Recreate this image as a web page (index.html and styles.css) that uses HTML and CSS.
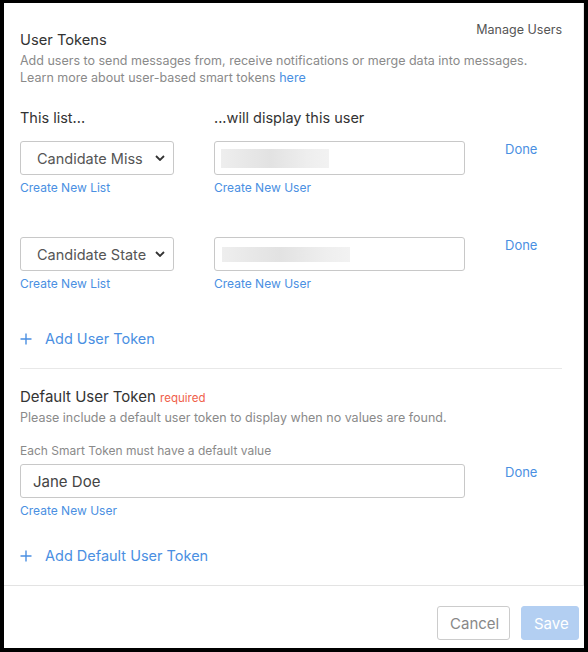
FILE: index.html
```html
<!DOCTYPE html>
<html>
<head>
<meta charset="utf-8">
<link rel="stylesheet" href="styles.css">
</head>
<body>
<div class="panel">
  <div class="content">
    <div class="header">
      <div class="title">User Tokens</div>
      <div class="manage">Manage Users</div>
    </div>
    <p class="desc">Add users to send messages from, receive notifications or merge data into messages.<br>Learn more about user-based smart tokens <a class="link">here</a></p>

    <div class="cols">
      <div class="col-a colhead">This list...</div>
      <div class="col-b colhead">...will display this user</div>
    </div>

    <div class="row">
      <div class="col-a">
        <div class="select"><span class="sel-text">Candidate Miss</span><svg class="chev" viewBox="0 0 10 6" width="10" height="6"><path d="M1 1l4 4 4-4" fill="none" stroke="#333" stroke-width="1.8"/></svg></div>
        <a class="link small">Create New List</a>
      </div>
      <div class="col-b">
        <div class="input"><span class="blur b1"></span></div>
        <a class="link small">Create New User</a>
      </div>
      <a class="link done">Done</a>
    </div>

    <div class="row">
      <div class="col-a">
        <div class="select"><span class="sel-text">Candidate State</span><svg class="chev" viewBox="0 0 10 6" width="10" height="6"><path d="M1 1l4 4 4-4" fill="none" stroke="#333" stroke-width="1.8"/></svg></div>
        <a class="link small">Create New List</a>
      </div>
      <div class="col-b">
        <div class="input"><span class="blur b2"></span></div>
        <a class="link small">Create New User</a>
      </div>
      <a class="link done">Done</a>
    </div>

    <a class="link add"><svg class="plus" viewBox="0 0 12 12" width="12" height="12"><path d="M6 0.5v11M0.5 6h11" stroke="#4a8fe2" stroke-width="1.4" fill="none"/></svg>Add User Token</a>

    <div class="sep"></div>

    <div class="title2">Default User Token <span class="req">required</span></div>
    <p class="desc2">Please include a default user token to display when no values are found.</p>
    <p class="desc3">Each Smart Token must have a default value</p>

    <div class="row row-default">
      <div class="col-wide">
        <div class="input wide"><span class="val">Jane Doe</span></div>
        <a class="link small">Create New User</a>
      </div>
      <a class="link done">Done</a>
    </div>

    <a class="link add add2"><svg class="plus" viewBox="0 0 12 12" width="12" height="12"><path d="M6 0.5v11M0.5 6h11" stroke="#4a8fe2" stroke-width="1.4" fill="none"/></svg>Add Default User Token</a>
  </div>
  <div class="footer">
    <button class="btn cancel">Cancel</button>
    <button class="btn save">Save</button>
  </div>
</div>
</body>
</html>
```
FILE: styles.css
```css
* { box-sizing: border-box; }
html, body { margin: 0; padding: 0; }
body {
  background: #000;
  width: 588px;
  height: 652px;
  padding: 3px 4px 4px 4px;
  font-family: "Inter", "Liberation Sans", sans-serif;
}
.panel {
  width: 580px;
  height: 645px;
  background: #fff;
  display: flex;
  flex-direction: column;
}
.content {
  height: 583px;
  border-right: 1px solid #e6e6e6;
  border-bottom: 1px solid #e3e3e3;
  padding: 0 21px 0 16px;
}
.header {
  display: flex;
  justify-content: space-between;
  align-items: flex-start;
}
.title {
  font-size: 14.7px;
  color: #333;
  margin-top: 28px;
  line-height: 18px;
}
.manage {
  font-size: 12.5px;
  color: #555;
  margin-top: 19px;
  line-height: 16px;
}
.desc {
  margin: 3px 0 0;
  font-size: 12.5px;
  line-height: 17px;
  color: #8a8a8a;
}
.link { color: #4a8fe2; text-decoration: none; cursor: pointer; }
.cols { display: flex; margin-top: 23px; }
.colhead { font-size: 14.5px; color: #333; line-height: 18px; }
.col-a { width: 194px; display: flex; flex-direction: column; }
.col-b { width: 251px; display: flex; flex-direction: column; }
.row { display: flex; margin-top: 14px; align-items: flex-start; }
.row + .row { margin-top: 42px; }
.select {
  width: 154px;
  height: 34px;
  border: 1px solid #c8c8c8;
  border-radius: 3px;
  display: flex;
  align-items: center;
  padding: 0 8px 0 16px;
  overflow: hidden;
}
.sel-text {
  font-size: 14.5px;
  color: #555;
  white-space: nowrap;
  overflow: hidden;
  width: 109px;
  flex: none;
}
.chev { margin-left: auto; flex: none; }
.small { font-size: 12px; line-height: 15px; margin-top: 5px; }
.input {
  width: 251px;
  height: 34px;
  border: 1px solid #c8c8c8;
  border-radius: 3px;
  display: flex;
  align-items: center;
  padding-left: 6px;
}
.blur {
  display: block;
  height: 19px;
  background: linear-gradient(90deg, #eeeeee 0%, #e2e2e2 45%, #eeeeee 80%, #f2f2f2 100%);
  filter: blur(0.6px);
}
.b1 { width: 108px; }
.b2 { width: 128px; height: 15px; margin-left: 1px; }
.done { font-size: 13px; margin-left: 40px; margin-top: 0; line-height: 16px; }
.add {
  display: flex;
  align-items: center;
  font-size: 14.5px;
  margin-top: 39px;
  line-height: 18px;
}
.plus { width: 12px; height: 12px; margin-right: 13px; flex: none; }
.sep { height: 1px; background: #e8e8e8; margin-top: 20px; }
.title2 { font-size: 15px; color: #333; margin-top: 19px; line-height: 18px; }
.req { font-size: 11.5px; color: #f0604a; }
.desc2 { margin: 3px 0 0; font-size: 12.5px; color: #8a8a8a; line-height: 16px; }
.desc3 { margin: 17px 0 0; font-size: 12px; color: #8a8a8a; line-height: 16px; }
.row-default { margin-top: 5px; }
.col-wide { width: 445px; display: flex; flex-direction: column; }
.input.wide { width: 445px; height: 34px; padding-left: 12px; }
.val { font-size: 15px; color: #444; }
.add2 { margin-top: 29px; }
.footer {
  flex: 1;
  display: flex;
  justify-content: flex-end;
  align-items: flex-start;
  padding: 20px 5px 0 0;
  gap: 11px;
}
.btn {
  height: 34px;
  font-family: inherit;
  font-size: 15px;
  border-radius: 3px;
  padding: 0 12px;
}
.cancel { background: #fff; border: 1px solid #ccc; color: #888; width: 73px; }
.save { background: #b3cff2; border: 1px solid #b3cff2; color: #fff; width: 58px; }
```
